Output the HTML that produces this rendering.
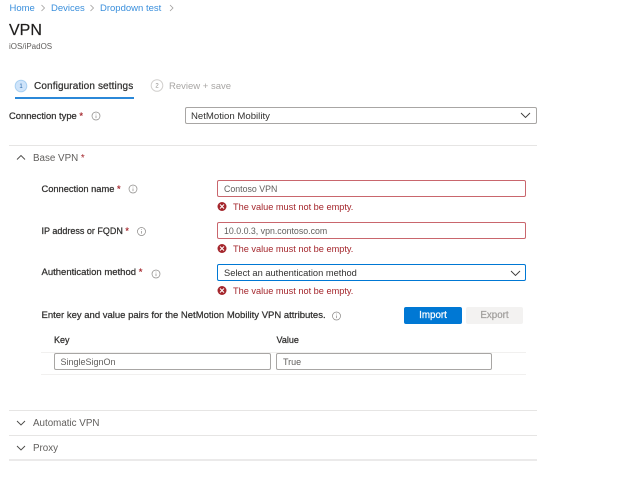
<!DOCTYPE html>
<html lang="en">
<head>
<meta charset="utf-8">
<title>VPN</title>
<style>
html,body{margin:0;padding:0;background:#fff;}
#p{position:relative;width:624px;height:499px;overflow:hidden;background:#fff;font-family:"Liberation Sans",Arial,sans-serif;font-size:9px;color:#323130;filter:blur(0.25px);}
.t{position:absolute;white-space:nowrap;line-height:12px;height:12px;}
.b{font-weight:400;-webkit-text-stroke:0.25px currentColor;}
.l{color:#3a8fdc;}
.s{color:#a4262c;}
.g{color:#605e5c;}
.box{position:absolute;box-sizing:border-box;background:#fff;border:1px solid #a8a6a4;border-radius:2px;}
.red{border-color:#c9666d;}
.hr{position:absolute;height:1px;background:#e6e5e4;}
.hr2{position:absolute;height:1px;background:#f1f0ef;}
svg{position:absolute;left:0;top:0;}
.btn{position:absolute;box-sizing:border-box;height:17px;line-height:18px;text-align:center;font-size:9.8px;border-radius:2px;}
</style>
</head>
<body>
<div id="p">
  <span class="t l" style="left:9.5px;top:2.500px;font-size:9.5px;">Home</span>
  <span class="t l" style="left:51px;top:2.500px;font-size:9.5px;">Devices</span>
  <span class="t l" style="left:100px;top:2.500px;font-size:9.5px;">Dropdown test</span>
  <span class="t" style="left:9px;top:23px;height:16px;line-height:16px;font-size:16px;color:#201f1e;-webkit-text-stroke:0.2px #201f1e;">VPN</span>
  <span class="t g" style="left:9px;top:41px;font-size:8px;">iOS/iPadOS</span>

  <span class="t b" style="left:34px;top:81px;font-size:10px;letter-spacing:.12px;">Configuration settings</span>
  <span class="t" style="left:169px;top:81px;font-size:9.5px;color:#a8a6a4;">Review + save</span>
  <div style="position:absolute;left:15px;top:97px;width:119px;height:2px;background:#2b88d8;"></div>

  <span class="t b" style="left:9px;top:110px;font-size:9.4px;">Connection type <span class="s">*</span></span>
  <div class="box" style="left:185px;top:107px;width:352px;height:17px;"></div>
  <span class="t" style="left:191px;top:110px;line-height:13px;font-size:9.6px;">NetMotion Mobility</span>

  <div class="hr" style="left:9px;top:145px;width:528px;"></div>
  <span class="t g" style="left:33px;top:152.500px;font-size:9.8px;">Base VPN <span class="s">*</span></span>

  <span class="t b" style="left:41.500px;top:183px;font-size:9.3px;">Connection name <span class="s">*</span></span>
  <div class="box red" style="left:217px;top:180px;width:309px;height:17px;"></div>
  <span class="t g" style="left:224px;top:183px;font-size:8.8px;">Contoso VPN</span>
  <span class="t s" style="left:233px;top:201px;font-size:9.2px;">The value must not be empty.</span>

  <span class="t b" style="left:41.500px;top:225px;font-size:9px;">IP address or FQDN <span class="s">*</span></span>
  <div class="box red" style="left:217px;top:222px;width:309px;height:17px;"></div>
  <span class="t g" style="left:224px;top:225px;font-size:8.8px;">10.0.0.3, vpn.contoso.com</span>
  <span class="t s" style="left:233px;top:243px;font-size:9.2px;">The value must not be empty.</span>

  <span class="t b" style="left:41.500px;top:267px;font-size:9.5px;">Authentication method <span class="s">*</span></span>
  <div class="box" style="left:217px;top:264px;width:309px;height:17px;border-color:#0078d4;"></div>
  <span class="t" style="left:224px;top:267px;font-size:9.3px;">Select an authentication method</span>
  <span class="t s" style="left:233px;top:285px;font-size:9.2px;">The value must not be empty.</span>

  <span class="t b" style="left:41.500px;top:309.500px;font-size:9.5px;">Enter key and value pairs for the NetMotion Mobility VPN attributes.</span>
  <div class="btn b" style="left:404px;top:307px;width:58px;background:#0078d4;color:#fff;">Import</div>
  <div class="btn b" style="left:466px;top:307px;width:57px;background:#f3f2f1;color:#a19f9d;">Export</div>

  <span class="t b" style="left:54px;top:334px;font-size:9px;">Key</span>
  <span class="t b" style="left:276.500px;top:334px;font-size:9px;">Value</span>
  <div class="hr2" style="left:41px;top:352px;width:485px;"></div>
  <div class="hr2" style="left:41px;top:374px;width:485px;"></div>
  <div class="box" style="left:54px;top:353px;width:217px;height:17px;"></div>
  <div class="box" style="left:276px;top:353px;width:216px;height:17px;"></div>
  <span class="t g" style="left:60.500px;top:356px;font-size:9px;">SingleSignOn</span>
  <span class="t g" style="left:283px;top:356px;font-size:9px;">True</span>

  <div class="hr" style="left:9px;top:410px;width:528px;"></div>
  <span class="t g" style="left:33px;top:417.500px;font-size:9.8px;">Automatic VPN</span>
  <div class="hr" style="left:9px;top:435px;width:528px;"></div>
  <span class="t g" style="left:33px;top:442.500px;font-size:9.8px;">Proxy</span>
  <div class="hr" style="left:9px;top:459px;width:528px;height:2px;background:#ebeaea;"></div>

  <svg width="624" height="499" viewBox="0 0 624 499" fill="none">
    <!-- breadcrumb separators -->
    <g stroke="#a19f9d" stroke-width=".8">
      <path d="M41.500 5l3 3-3 3M90.500 5l3 3-3 3M170 5l3 3-3 3"/>
    </g>
    <!-- step circles -->
    <circle cx="21" cy="86" r="5.800" fill="#cfe4fa" stroke="#a9d0f2" stroke-width="1"/>
    <circle cx="157" cy="85.500" r="5.800" fill="#fff" stroke="#d2d0ce" stroke-width="1"/>
    <text x="21" y="88.200" text-anchor="middle" font-size="6" font-family="Liberation Sans, sans-serif" fill="#2b6aa8">1</text>
    <text x="157" y="87.700" text-anchor="middle" font-size="6" font-family="Liberation Sans, sans-serif" fill="#8a8886">2</text>
    <!-- info icons -->
    <g stroke="#8a8886" stroke-width=".7">
      <circle cx="96" cy="116" r="4"/><path d="M96 115.500v2.600M96 113.600v.8"/>
      <circle cx="133" cy="189" r="4"/><path d="M133 188.500v2.600M133 186.600v.8"/>
      <circle cx="141.500" cy="231.500" r="4"/><path d="M141.500 231v2.600M141.500 229.100v.8"/>
      <circle cx="156" cy="274" r="4"/><path d="M156 273.500v2.600M156 271.600v.8"/>
      <circle cx="336.500" cy="316" r="4"/><path d="M336.500 315.500v2.600M336.500 313.600v.8"/>
    </g>
    <!-- chevrons -->
    <g stroke="#3b3a39" stroke-width=".9">
      <path d="M521 113l4.500 4.500 4.500-4.500"/>
      <path d="M511 271l4.500 4.500 4.500-4.500"/>
    </g>
    <g stroke="#4a4947" stroke-width=".9">
      <path d="M17 159.500l4-4 4 4"/>
      <path d="M17 421l4 4 4-4"/>
      <path d="M17 446l4 4 4-4"/>
    </g>
    <!-- error icons -->
    <g>
      <circle cx="222" cy="206.500" r="4.500" fill="#a4262c"/>
      <path d="M220 204.500l4 4M224 204.500l-4 4" stroke="#fff" stroke-width="1.100"/>
      <circle cx="222" cy="248.500" r="4.500" fill="#a4262c"/>
      <path d="M220 246.500l4 4M224 246.500l-4 4" stroke="#fff" stroke-width="1.100"/>
      <circle cx="222" cy="290.500" r="4.500" fill="#a4262c"/>
      <path d="M220 288.500l4 4M224 288.500l-4 4" stroke="#fff" stroke-width="1.100"/>
    </g>
  </svg>
</div>
</body>
</html>
